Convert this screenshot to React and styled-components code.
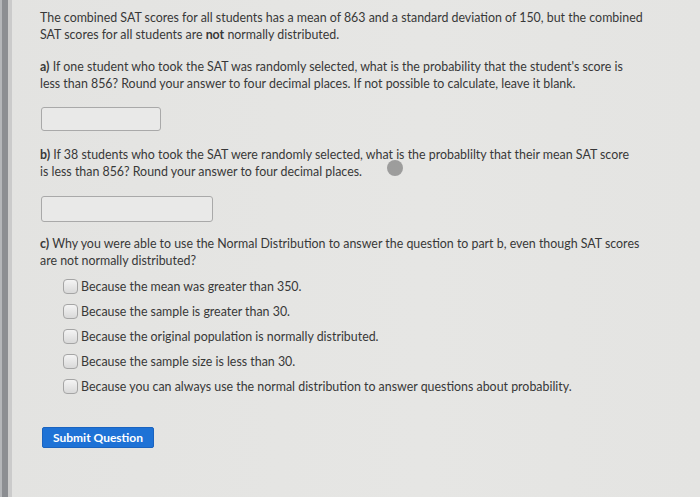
import React from "react";
import styled, { createGlobalStyle } from "styled-components";

const GlobalStyle = createGlobalStyle`
  html, body {
    margin: 0;
    padding: 0;
    background: #e5e5e3;
  }
  body {
    font-family: Lato, "DejaVu Sans", sans-serif;
  }
`

const Page = styled.div`
  width: 700px;
  height: 497px;
  display: flex;
  overflow: hidden;
  background: linear-gradient(90deg, #e3e3e1 0%, #e6e6e4 60%, #e4e4e2 100%);
`

const EdgeStrip = styled.div`
  width: 12px;
  flex-shrink: 0;
  display: flex;
  .outer { width: 2px; background: #b4b6b9; }
  .dark { width: 6px; background: #8c8e92; }
  .light { width: 4px; background: #cbcbcb; }
`

const Content = styled.div`
  position: relative;
  flex: 1;
  padding: 9px 0 0 28px;
  color: #383838;
  font-size: 12.4px;
  line-height: 17px;
`

const Paragraph = styled.p`
  margin: 0 0 ${(p) => p.gap || 0}px 0;
  width: ${(p) => p.w || 606}px;
`

const AnswerBox = styled.div`
  width: ${(p) => p.w}px;
  height: ${(p) => p.h}px;
  box-sizing: border-box;
  border: 1px solid #a9a9a9;
  border-radius: 3px;
  background: #e9e9e8;
  margin: 0 0 ${(p) => p.gap || 0}px 1px;
`

const OptionList = styled.div`
  display: flex;
  flex-direction: column;
  gap: 8px;
  margin: 9px 0 0 23px;
`

const Option = styled.label`
  display: flex;
  align-items: center;
  gap: 3px;
  height: 17px;
`

const Box = styled.span`
  width: 13px;
  height: 13px;
  border: 1px solid #a5a5a5;
  border-radius: 4px;
  background: linear-gradient(180deg, #f4f4f4 0%, #d9d9d9 100%);
  flex-shrink: 0;
`

const SubmitButton = styled.button`
  display: block;
  margin: 32px 0 0 2px;
  height: 21px;
  padding: 0 10px;
  border: 1px solid #1a63bf;
  border-radius: 2px;
  background: #1e72d6;
  color: #ffffff;
  font-family: Lato, "DejaVu Sans", sans-serif;
  font-size: 12px;
  font-weight: 700;
  cursor: pointer;
`

const CursorDot = styled.span`
  position: absolute;
  left: 375px;
  top: 160px;
  width: 16px;
  height: 16px;
  border-radius: 50%;
  background: #8f8f8f;
  opacity: 0.85;
`

const options = [
  "Because the mean was greater than 350.",
  "Because the sample is greater than 30.",
  "Because the original population is normally distributed.",
  "Because the sample size is less than 30.",
  "Because you can always use the normal distribution to answer questions about probability.",
];

const App = () => {
  return (
    <>
      <GlobalStyle />
      <Page>
        <EdgeStrip>
          <div className="outer" />
          <div className="dark" />
          <div className="light" />
        </EdgeStrip>
        <Content>
          <Paragraph gap={15}>
            The combined SAT scores for all students has a mean of 863 and a standard deviation of 150, but the combined SAT scores for all students are <b>not</b> normally distributed.
          </Paragraph>
          <Paragraph gap={15}>
            <b>a)</b> If one student who took the SAT was randomly selected, what is the probability that the student's score is less than 856? Round your answer to four decimal places. If not possible to calculate, leave it blank.
          </Paragraph>
          <AnswerBox w={120} h={24} gap={15} />
          <Paragraph gap={16} w={596}>
            <b>b)</b> If 38 students who took the SAT were randomly selected, what is the probablilty that their mean SAT score is less than 856? Round your answer to four decimal places.
          </Paragraph>
          <AnswerBox w={172} h={26} gap={13} />
          <Paragraph>
            <b>c)</b> Why you were able to use the Normal Distribution to answer the question to part b, even though SAT scores are not normally distributed?
          </Paragraph>
          <OptionList>
            {options.map((text, i) => (
              <Option key={i}>
                <Box />
                {text}
              </Option>
            ))}
          </OptionList>
          <SubmitButton>Submit Question</SubmitButton>
          <CursorDot />
        </Content>
      </Page>
    </>
  )
}

export default App
